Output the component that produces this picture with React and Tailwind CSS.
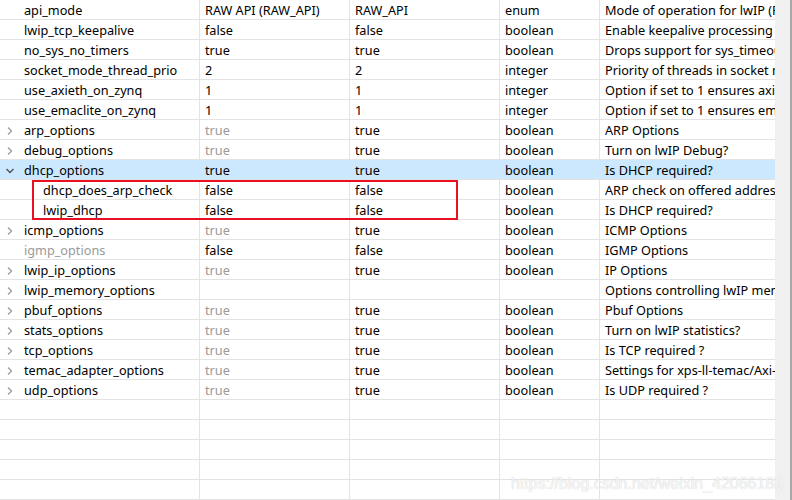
const rows = [
  { name: 'api_mode', value: 'RAW API (RAW_API)', def: 'RAW_API', type: 'enum', desc: 'Mode of operation for lwIP (RAW API/SOCKET API)' },
  { name: 'lwip_tcp_keepalive', value: 'false', def: 'false', type: 'boolean', desc: 'Enable keepalive processing with default interval' },
  { name: 'no_sys_no_timers', value: 'true', def: 'true', type: 'boolean', desc: 'Drops support for sys_timeout when NO_SYS==1' },
  { name: 'socket_mode_thread_prio', value: '2', def: '2', type: 'integer', desc: 'Priority of threads in socket mode' },
  { name: 'use_axieth_on_zynq', value: '1', def: '1', type: 'integer', desc: 'Option if set to 1 ensures axieth adapter usage' },
  { name: 'use_emaclite_on_zynq', value: '1', def: '1', type: 'integer', desc: 'Option if set to 1 ensures emaclite adapter usage' },
  { name: 'arp_options', chevron: 'right', value: 'true', dimValue: true, def: 'true', type: 'boolean', desc: 'ARP Options' },
  { name: 'debug_options', chevron: 'right', value: 'true', dimValue: true, def: 'true', type: 'boolean', desc: 'Turn on lwIP Debug?' },
  { name: 'dhcp_options', chevron: 'down', value: 'true', def: 'true', type: 'boolean', desc: 'Is DHCP required?', selected: true },
  { name: 'dhcp_does_arp_check', child: true, value: 'false', def: 'false', type: 'boolean', desc: 'ARP check on offered address' },
  { name: 'lwip_dhcp', child: true, value: 'false', def: 'false', type: 'boolean', desc: 'Is DHCP required?' },
  { name: 'icmp_options', chevron: 'right', value: 'true', dimValue: true, def: 'true', type: 'boolean', desc: 'ICMP Options' },
  { name: 'igmp_options', dimName: true, value: 'false', def: 'false', type: 'boolean', desc: 'IGMP Options' },
  { name: 'lwip_ip_options', chevron: 'right', value: 'true', dimValue: true, def: 'true', type: 'boolean', desc: 'IP Options' },
  { name: 'lwip_memory_options', chevron: 'right', value: '', def: '', type: '', desc: 'Options controlling lwIP memory usage' },
  { name: 'pbuf_options', chevron: 'right', value: 'true', dimValue: true, def: 'true', type: 'boolean', desc: 'Pbuf Options' },
  { name: 'stats_options', chevron: 'right', value: 'true', dimValue: true, def: 'true', type: 'boolean', desc: 'Turn on lwIP statistics?' },
  { name: 'tcp_options', chevron: 'right', value: 'true', dimValue: true, def: 'true', type: 'boolean', desc: 'Is TCP required ?' },
  { name: 'temac_adapter_options', chevron: 'right', value: 'true', dimValue: true, def: 'true', type: 'boolean', desc: 'Settings for xps-ll-temac/Axi-Ethernet/Gem Adapters' },
  { name: 'udp_options', chevron: 'right', value: 'true', dimValue: true, def: 'true', type: 'boolean', desc: 'Is UDP required ?' },
];

const emptyRows = 5;

const Chevron = ({ dir }) => {
  if (dir === 'down') {
    return (
      <svg width="10" height="10" viewBox="0 0 10 10" className="shrink-0">
        <path d="M1.5 3 L5 6.5 L8.5 3" fill="none" stroke="#505050" strokeWidth="1.4" />
      </svg>
    );
  }
  return (
    <svg width="10" height="10" viewBox="0 0 10 10" className="shrink-0">
      <path d="M3 1.5 L6.5 5 L3 8.5" fill="none" stroke="#a0a0a0" strokeWidth="1.4" />
    </svg>
  );
};

const Cell = ({ className = '', children }) => (
  <div className={`h-5 pt-[2px] border-r border-b border-[#e3e3e3] overflow-hidden whitespace-nowrap flex items-center ${className}`}>
    {children}
  </div>
);

const App = () => {
  return (
    <div className="w-[792px] h-[500px] overflow-hidden bg-white flex text-[12.7px] text-black font-['Microsoft_YaHei','Noto_Sans',sans-serif] relative">
      <div className="w-[775px] flex flex-col">
        {rows.map((row) => (
          <div key={row.name} className={`grid grid-cols-[200px_150px_150px_100px_175px] ${row.selected ? 'bg-[#cce8ff]' : ''}`}>
            <Cell className={row.child ? 'pl-[43px]' : 'pl-[5px]'}>
              {!row.child && (
                <span className="w-[19px] flex items-center">{row.chevron && <Chevron dir={row.chevron} />}</span>
              )}
              <span className={row.dimName ? 'text-[#9a9a9a]' : ''}>{row.name}</span>
            </Cell>
            <Cell className={`pl-[5px] ${row.dimValue ? 'text-[#9a9a9a]' : ''}`}>{row.value}</Cell>
            <Cell className="pl-[5px]">{row.def}</Cell>
            <Cell className="pl-[5px]">{row.type}</Cell>
            <Cell className="pl-[5px] border-r-0">{row.desc}</Cell>
          </div>
        ))}
        {Array.from({ length: emptyRows }).map((_, i) => (
          <div key={i} className="grid grid-cols-[200px_150px_150px_100px_175px]">
            <Cell />
            <Cell />
            <Cell />
            <Cell />
            <Cell className="border-r-0" />
          </div>
        ))}
      </div>
      <div className="w-[15px] bg-[#f0f0f0]" />
      <div className="w-[2px] bg-[#a8a8a8]" />

      <div className="absolute left-[32px] top-[180px] w-[426px] h-[40px] border-2 border-[#e81123]" />

      <div className="absolute left-[511px] top-[472px] text-[16px] font-['Liberation_Sans',Arial,sans-serif] text-[#f7f7f7] [text-shadow:0_0_1px_#c4c4c4]">
        https://blog.csdn.net/weixin_42066185
      </div>
    </div>
  );
};

export default App;
